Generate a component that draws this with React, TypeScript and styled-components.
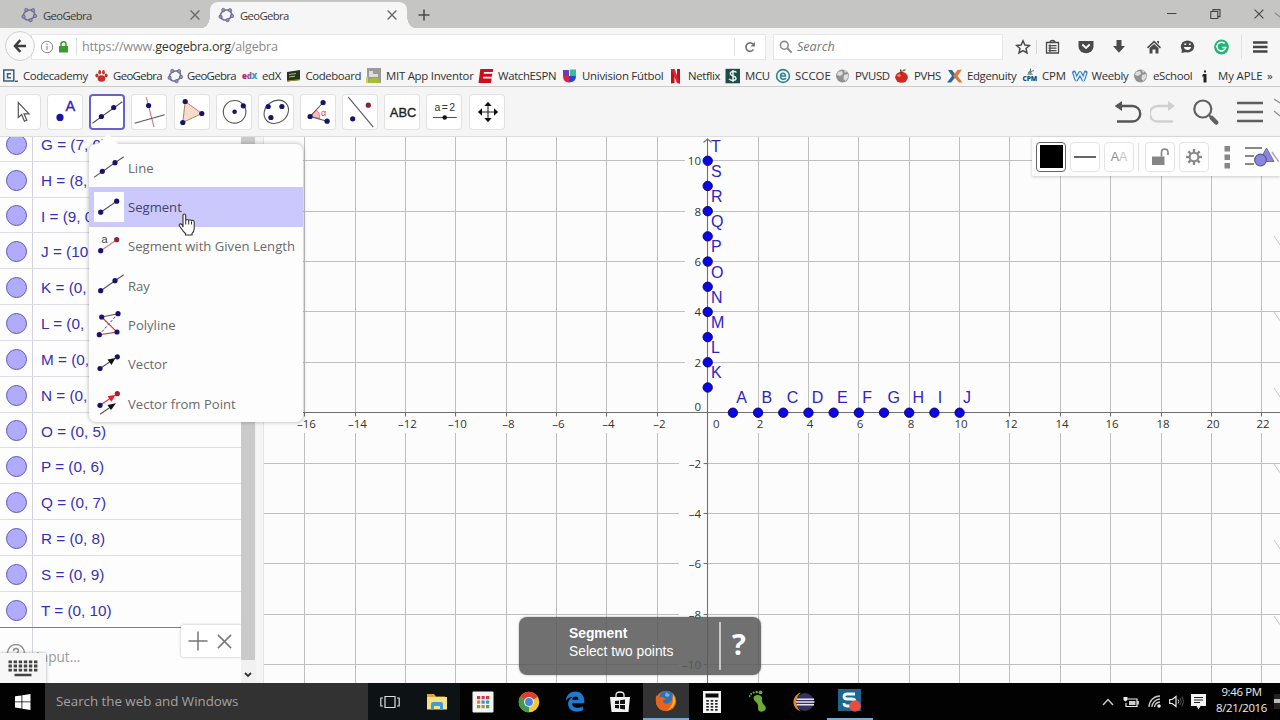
import React from 'react';
import styled, { createGlobalStyle } from 'styled-components';

const UI = '"Open Sans", "Noto Sans", sans-serif';
const ARIAL = '"Liberation Sans", Arial, sans-serif';

const GlobalStyle = createGlobalStyle`
  * { box-sizing: border-box; }
  body { margin: 0; overflow: hidden; font-family: ${UI}; }
  svg { display: block; flex: none; }
`;

const Screen = styled.div`
  position: relative;
  width: 1280px;
  height: 720px;
  display: flex;
  flex-direction: column;
  overflow: hidden;
  background: #fcfcfc;
`;

/* ---------- window frame and tabs ---------- */

const TabStrip = styled.div`
  height: 28px;
  flex: none;
  display: flex;
  align-items: flex-end;
  background: #c5c5c3;
  padding-left: 8px;
`;

const Tab = styled.div<{ $active?: boolean }>`
  position: relative;
  width: ${p => (p.$active ? 197 : 199)}px;
  margin-right: ${p => (p.$active ? 8 : 3)}px;
  height: 26px;
  padding: 0 ${p => (p.$active ? 10 : 7)}px 0 ${p => (p.$active ? 8 : 13)}px;
  display: flex;
  align-items: center;
  gap: 6px;
  font-size: 11.3px;
  letter-spacing: -0.65px;
  color: #3c3c3c;
  border-radius: 8px 8px 0 0;
  background: ${p => (p.$active ? '#f6f6f6' : 'transparent')};
  &::before, &::after {
    content: '';
    display: ${p => (p.$active ? 'block' : 'none')};
    position: absolute;
    bottom: 0;
    width: 8px;
    height: 12px;
  }
  &::before { left: -8px; background: radial-gradient(ellipse 8px 12px at 0 0, transparent 97%, #f6f6f6 100%); }
  &::after { right: -8px; background: radial-gradient(ellipse 8px 12px at 100% 0, transparent 97%, #f6f6f6 100%); }
`;

const Grow = styled.div`flex: 1;`;

const WindowButtons = styled.div`
  display: flex;
  align-items: center;
  gap: 33px;
  height: 28px;
  padding-right: 16px;
`;

/* ---------- address row ---------- */

const AddressRow = styled.div`
  height: 37px;
  flex: none;
  display: flex;
  align-items: center;
  background: #f6f6f6;
  padding-left: 5px;
`;

const BackButton = styled.div`
  position: relative;
  z-index: 1;
  width: 30px;
  height: 30px;
  margin-top: -1px;
  border-radius: 50%;
  border: 1px solid #cfcfcf;
  background: #fafafa;
  display: flex;
  align-items: center;
  justify-content: center;
`;

const UrlField = styled.div`
  width: 735px;
  height: 26px;
  margin-left: -4px;
  padding-left: 7px;
  background: #fff;
  border: 1px solid #e6e6e6;
  display: flex;
  align-items: center;
  font-size: 12.6px;
  color: #8a8a8a;
`;

const UrlText = styled.div`
  padding-left: 5px;
  margin-left: 6px;
  border-left: 1px solid #dcdcdc;
  letter-spacing: -0.2px;
  b { font-weight: 400; color: #333; }
`;

const Reload = styled.div`
  width: 31px;
  height: 18px;
  border-left: 1px solid #e0e0e0;
  display: flex;
  align-items: center;
  justify-content: center;
`;

const SearchField = styled.div`
  width: 230px;
  height: 26px;
  margin-left: 7px;
  padding-left: 5px;
  display: flex;
  align-items: center;
  gap: 4px;
  background: #fff;
  border: 1px solid #e6e6e6;
  font: italic 12.6px ${UI};
  color: #777;
`;

const BrowserActions = styled.div`
  display: flex;
  align-items: center;
  padding-left: 12px;
`;

const ActionSlot = styled.div<{ $w: number }>`
  width: ${p => p.$w}px;
  display: flex;
  align-items: center;
  justify-content: flex-start;
`;

/* ---------- bookmarks ---------- */

const Bookmarks = styled.div`
  height: 22px;
  flex: none;
  display: flex;
  align-items: center;
  padding-left: 3px;
  background: #f6f6f6;
  border-bottom: 1px solid #c9c9c9;
`;

const Bookmark = styled.div<{ $w: number; $ls?: number }>`
  width: ${p => p.$w}px;
  flex: none;
  display: flex;
  align-items: center;
  gap: 4px;
  font-size: 11.4px;
  letter-spacing: ${p => p.$ls ?? -0.35}px;
  color: #303030;
  white-space: nowrap;
`;

/* ---------- GeoGebra toolbar ---------- */

const Toolbar = styled.div`
  height: 50px;
  flex: none;
  display: flex;
  align-items: center;
  background: #f5f5f5;
  border-bottom: 1px solid #dedede;
  padding: 0 17px 0 5px;
`;

const Tools = styled.div`
  display: flex;
  gap: 6.15px;
`;

const Tool = styled.div<{ $active?: boolean }>`
  width: 36px;
  height: 36px;
  background: #fff;
  border-radius: 4px;
  box-shadow: inset 0 0 0 ${p => (p.$active ? '2px #6a5fcb' : '1px #e1e1e1')};
`;

const ToolbarRight = styled.div`
  display: flex;
  align-items: center;
  gap: 7px;
`;

/* ---------- work area ---------- */

const Work = styled.div`
  height: 546px;
  flex: none;
  display: flex;
`;

const AlgebraPanel = styled.div`
  position: relative;
  width: 241px;
  height: 546px;
  overflow: hidden;
  background: #fdfdfd;
`;

const Rows = styled.div`
  margin-top: -11.2px;
`;

const Row = styled.div`
  height: 35.85px;
  display: flex;
  border-bottom: 1px solid #dcdce2;
  &:last-child { border-bottom: 1px solid #7a74b8; }
`;

const Marble = styled.div`
  width: 33px;
  border-right: 1px solid #d2d2de;
  display: flex;
  align-items: center;
  padding: 2px 0 0 6px;
  &::before {
    content: '';
    width: 19px;
    height: 19px;
    border-radius: 50%;
    background: #b1abfb;
    border: 1.5px solid #6058b4;
  }
`;

const Expression = styled.div`
  padding: 10px 0 0 8px;
  font: 15.3px/18px ${ARIAL};
  color: #372fb8;
  white-space: nowrap;
`;

const InputRow = styled.div`
  height: 56px;
  display: flex;
  color: #9a9a9a;
  font: 13.6px/18px ${UI};
`;

const InputIcon = styled.div`
  width: 33px;
  padding: 15px 0 0 6px;
  border-right: 1px solid #d2d2de;
`;

const InputText = styled.div`
  padding: 20px 0 0 3px;
`;

const InputActions = styled.div`
  position: absolute;
  left: 181px;
  top: 488px;
  width: 60px;
  height: 32px;
  padding-left: 7px;
  display: flex;
  align-items: center;
  gap: 9px;
  background: #fff;
  border-radius: 3px 0 0 3px;
  box-shadow: 0 0 3px rgba(0, 0, 0, 0.28);
`;

const KeyboardButton = styled.div`
  position: absolute;
  left: 0;
  top: 516px;
  width: 46px;
  height: 31px;
  background: #f7f7f7;
  box-shadow: 0 0 3px rgba(0, 0, 0, 0.35);
  padding: 7px 0 0 8px;
`;

const ScrollTrack = styled.div`
  width: 15px;
  display: flex;
  flex-direction: column;
  background: #f1f1f1;
`;

const ScrollThumb = styled.div`
  height: 523px;
  width: 14px;
  background: #cacaca;
`;

const ScrollDown = styled.div`
  flex: 1;
  display: flex;
  align-items: center;
  justify-content: center;
  padding: 6px 2px 0 0;
`;

const Divider = styled.div`
  width: 8px;
  background: #f5f5f5;
  border-right: 1px solid #e4e4e4;
`;

const GraphPanel = styled.div`
  position: relative;
  width: 1016px;
  height: 546px;
  background: #fcfcfc;
`;

const StyleBar = styled.div`
  position: absolute;
  right: 0;
  top: 0;
  width: 248px;
  height: 39px;
  padding-left: 4px;
  display: flex;
  align-items: center;
  background: #fdfdfd;
  box-shadow: 0 1px 3px rgba(0, 0, 0, 0.2);
`;

const StyleButton = styled.div<{ $gap?: number; $selected?: boolean }>`
  width: 30px;
  height: 30px;
  margin-right: ${p => p.$gap ?? 4}px;
  border-radius: 4px;
  border: ${p => (p.$selected ? '1.5px solid #666' : '1px solid #e4e4e4')};
  background: #fff;
  display: flex;
  align-items: center;
  justify-content: center;
  font: 12.5px ${ARIAL};
  color: #8d8d8d;
  span { color: #c4c4c4; }
`;

const Swatch = styled.div`
  width: 23px;
  height: 23px;
  background: #000;
`;

const BarSeparator = styled.div`
  width: 1px;
  height: 28px;
  background: #e2e2e2;
  margin-right: 6px;
`;

const Hint = styled.div`
  position: absolute;
  left: 255px;
  top: 480px;
  width: 242px;
  height: 58px;
  border-radius: 8px;
  background: rgba(88, 88, 88, 0.86);
  box-shadow: 0 0 2px rgba(0, 0, 0, 0.4);
  display: flex;
  align-items: center;
  color: #fff;
  font: 13.8px/18px ${ARIAL};
`;

const HintText = styled.div`
  width: 200px;
  padding: 0 0 6px 50px;
  white-space: nowrap;
`;

const HintHelp = styled.div`
  height: 48px;
  width: 41px;
  border-left: 2px solid #c8c8c8;
  display: flex;
  align-items: center;
  justify-content: center;
  padding: 0 3px 5px 0;
  font: 700 29px ${UI};
`;

/* ---------- tool menu ---------- */

const Menu = styled.div`
  position: absolute;
  left: 89px;
  top: 144px;
  width: 214px;
  height: 278px;
  padding-top: 4px;
  border-radius: 7px;
  background: #fdfdfd;
  box-shadow: 0 0 4px rgba(0, 0, 0, 0.32);
  &::before {
    content: '';
    position: absolute;
    left: 8px;
    top: -10px;
    border: 11px solid transparent;
    border-top: 0;
    border-bottom: 11px solid #fdfdfd;
  }
`;

const MenuItem = styled.div<{ $active?: boolean }>`
  height: 39.35px;
  padding-left: 5px;
  display: flex;
  align-items: center;
  gap: 4px;
  font-size: 13.1px;
  white-space: nowrap;
  color: ${p => (p.$active ? '#464266' : '#6a6a6a')};
  background: ${p => (p.$active ? '#cbc8fb' : 'transparent')};
`;

const MenuIcon = styled.div<{ $active?: boolean }>`
  width: 30px;
  height: 30px;
  background: ${p => (p.$active ? '#fdfdff' : 'transparent')};
`;

const Cursor = styled.div`
  position: absolute;
  left: 177px;
  top: 212px;
`;

const EdgeMarks = styled.div`
  position: absolute;
  right: 0;
  top: 0;
`;

/* ---------- taskbar ---------- */

const Taskbar = styled.div`
  height: 37px;
  flex: none;
  display: flex;
  background: #020202;
  color: #fff;
`;

const StartButton = styled.div`
  width: 45px;
  display: flex;
  align-items: center;
  justify-content: center;
`;

const TaskSearch = styled.div`
  width: 323px;
  padding-left: 11px;
  background: #323232;
  color: #a3a3a3;
  font-size: 13.3px;
  line-height: 37px;
`;

const TaskIcon = styled.div<{ $active?: boolean; $underline?: boolean; $dark?: boolean }>`
  width: 45.9px;
  display: flex;
  align-items: center;
  justify-content: center;
  background: ${p => (p.$active ? '#333' : p.$dark ? '#0d1215' : 'transparent')};
  border-bottom: ${p => (p.$active || p.$underline ? '2px solid #76a9d6' : '0')};
`;

const Tray = styled.div`
  display: flex;
  align-items: center;
`;

const TraySlot = styled.div<{ $w: number }>`
  width: ${p => p.$w}px;
  display: flex;
  justify-content: center;
`;

const Clock = styled.div`
  width: 62px;
  padding: 0 0 3px 1px;
  text-align: center;
  font-size: 11.4px;
  line-height: 16px;
  letter-spacing: -0.35px;
  color: #eee;
`;

/* ---------- drawings ---------- */

const NAVY = '#17126e';
const RED = '#c43c44';

const Dot = ({ x, y, c = NAVY, r = 2.6 }: { x: number; y: number; c?: string; r?: number }) => (
  <circle cx={x} cy={y} r={r} fill={c} />
);

const Seg = ({ d, c = '#555' }: { d: string; c?: string }) => (
  <path d={d} stroke={c} strokeWidth="1.1" fill="none" />
);

const GeoLogo = () => (
  <svg width="16" height="16" viewBox="0 0 16 16">
    <ellipse cx="8" cy="8" rx="5.8" ry="4.8" transform="rotate(-25 8 8)" fill="none" stroke="#77778a" strokeWidth="1.7" />
    {[[5.3, 3], [12, 3.2], [14, 9], [9.5, 13.2], [2.6, 9.8]].map(([x, y]) => (
      <circle key={x} cx={x} cy={y} r="1.7" fill="#8d8dcc" stroke="#555577" strokeWidth=".6" />
    ))}
  </svg>
);

const Cross = ({ s = 10, c = '#6b6b6b', w = 1.4 }: { s?: number; c?: string; w?: number }) => (
  <svg width={s} height={s} viewBox="0 0 10 10"><path d="M.6.6l8.8 8.8M9.4.6L.6 9.4" stroke={c} strokeWidth={(w * 10) / s} /></svg>
);

const Globe = () => (
  <svg width="16" height="16" viewBox="0 0 16 16">
    <circle cx="7.5" cy="8" r="6.5" fill="#929292" />
    <path d="M3 4l4-1 1 3-3 2-3-1zM9 7l4-1 .5 3-3 4-2-2zM9 2l3 1-2 2z" fill="#dedede" />
  </svg>
);

const favicons: Record<string, React.ReactNode> = {
  code: <><path d="M.8 2h10v11H.8z" fill="#eef3f6" stroke="#3c5f76" strokeWidth="1.5" /><path d="M8 5.8H4.5v4H8" fill="none" stroke="#3c5f76" strokeWidth="1.4" /><path d="M12 13.3h3" stroke="#3c5f76" strokeWidth="1.5" /></>,
  paw: <g fill="#c33228"><ellipse cx="8.5" cy="10.5" rx="3.8" ry="3.2" /><ellipse cx="3.9" cy="7.4" rx="1.5" ry="2" /><ellipse cx="6.7" cy="4.2" rx="1.4" ry="2.2" /><ellipse cx="10.5" cy="4.2" rx="1.4" ry="2.2" /><ellipse cx="13.1" cy="7.4" rx="1.5" ry="2" /></g>,
  edx: <text x="0" y="11" fontSize="9.5" textLength="15" lengthAdjust="spacingAndGlyphs" fontWeight="800" fontFamily="Open Sans"><tspan fill="#b72667">e</tspan><tspan fill="#8a5a9a">d</tspan><tspan fill="#1d9dd9">X</tspan></text>,
  board: <><path d="M1 4l13-2v10L1 13.5z" fill="#25331f" /><path d="M3 6.5l7-1M3 9l6-.8" stroke="#a3bd76" strokeWidth="1.2" /><path d="M1 13l13-1.4" stroke="#9b8d3b" /></>,
  mit: <><path d="M1 0h14v15H1z" fill="#9a9a9a" /><path d="M3 3h4v3h5v3H3z" fill="#dcdcdc" /><path d="M2 15c1-7 12-7 12 0z" fill="#a5bf2c" /><path d="M1 9v6" stroke="#d8d335" strokeWidth="2" /></>,
  espn: <path d="M2.3 1h13l-.6 3H6l-.3 1.8h8.6l-.5 3H5.2L5 10.5h8.600l-.6 4.5H.5z" fill="#c9101c" />,
  uni: <><path d="M1 2h6v6H1z" fill="#6d3bb4" /><path d="M8 1.500h6V8H8z" fill="#30c294" /><path d="M1 8h6v6.500Q1 14 1 8z" fill="#d8234d" /><path d="M7 8h7q0 6-7 6.500z" fill="#2447d6" /></>,
  netflix: <><path d="M3 1h3.500v14L3 15.500zM9 1h3v14.500L9 15z" fill="#b5131d" /><path d="M3 1h3.500L12 15.500 9 15z" fill="#e01f2a" /></>,
  mcu: <><path d="M.5.8h14.500v14.500H.5z" fill="#1f4c47" /><path d="M11.500 4.500c-3-2.500-7-.5-6 1.700s5.500 1.500 5.500 4-4 3-7 .8M8 2v12" stroke="#e6f0ee" strokeWidth="1.500" fill="none" /></>,
  sccoe: <g fill="none" stroke="#2f8296"><circle cx="8" cy="8" r="6.400" strokeWidth="1.600" /><path d="M5.500 8h5c0-4-5-3.500-5 .2s4 3.600 5.500 1.800" strokeWidth="1.500" /></g>,
  apple: <><ellipse cx="7.500" cy="9.300" rx="6.300" ry="5.500" fill="#cf2a20" /><ellipse cx="5" cy="7.500" rx="1.800" ry="1.300" fill="#f08a72" /><path d="M7.500 5.500L6.500 1.500" stroke="#5b3a1e" strokeWidth="1.300" /><path d="M7.500 3.500q2-3 4.500-2-1 2.600-4.500 2z" fill="#5d8d2b" /></>,
  edge: <><path d="M1 2l4 0 4.500 6L4 14.500 0 14.500 5 8z" fill="#31659a" /><path d="M15 1.500l-4.500.5L6 8l6 6.500h3.500L10.500 8z" fill="#e07a32" /></>,
  cpm: <><path d="M5 7l3-5 3 5z" fill="#7d9db4" /><path d="M8.500 .5v4.500M6 4.500l6-2" stroke="#5b7f60" /><text x=".5" y="13.200" fontSize="7" textLength="14.500" lengthAdjust="spacingAndGlyphs" fontWeight="800" fontFamily="Open Sans" fill="#27496d">CPM</text></>,
  weebly: <><path d="M2 4.500l2.300 7L8 5l3.400 6.500 2.300-7" stroke="#2d7cc4" strokeWidth="3.900" strokeLinejoin="round" strokeLinecap="round" fill="none" /><path d="M2 4.500l2.300 7L8 5l3.400 6.500 2.300-7" stroke="#e2f0fb" strokeWidth="1.700" fill="none" /></>,
  aple: <path d="M6 2.500h2v2H6zM5 6h3.500v8.500h-3V8.500H4z" fill="#222" />,
};

const Fav = ({ n }: { n: string }) => {
  if (n === 'geo') return <GeoLogo />;
  if (n === 'globe') return <Globe />;
  return <svg width="16" height="16" viewBox="0 0 16 16" overflow="visible">{favicons[n]}</svg>;
};

const bookmarks: [string, string, number, number?][] = [
  ['code', 'Codecademy', 90, -0.4], ['paw', 'GeoGebra', 74, -0.65], ['geo', 'GeoGebra', 75, -0.65], ['edx', 'edX', 43.5],
  ['board', 'Codeboard', 80.5, -0.4], ['mit', 'MIT App Inventor', 112, -0.25], ['espn', 'WatchESPN', 84], ['uni', 'Univision Fútbol', 106, -0.25],
  ['netflix', 'Netflix', 57], ['mcu', 'MCU', 50], ['sccoe', 'SCCOE', 60, 0], ['globe', 'PVUSD', 59], ['apple', 'PVHS', 53],
  ['edge', 'Edgenuity', 75], ['cpm', 'CPM', 49.5, -0.1], ['weebly', 'Weebly', 61.5], ['globe', 'eSchool', 65], ['aple', 'My APLE', 69, -0.1],
];

const toolIcons: React.ReactNode[] = [
  <path d="M13.300 8.500v15l3.400-3 2.700 6.700 2.400-1-2.800-6.400h5z" fill="#fff" stroke="#555" strokeWidth="1.200" />,
  <><Dot x={13} y={23.400} r={3.600} c="#1a13a8" /><text x="18.500" y="17.300" fontSize="14.500" fontFamily={ARIAL} fill="#3125bd" stroke="#3125bd" strokeWidth=".4">A</text></>,
  <><Seg d="M3.400 29.200L33.400 7.800" /><Dot x={12.400} y={22.500} /><Dot x={24.700} y={13.500} /></>,
  <><Seg d="M15.300 3.200l7.700 30" c="#d2777b" /><Seg d="M3.600 29.200l30-8.400" /><Dot x={17.600} y={11.500} /></>,
  <><path d="M11.200 7.500l16.600 12-19 9z" fill="#f5dccb" stroke="#b08468" /><Dot x={11.200} y={7.500} /><Dot x={27.800} y={19.500} /><Dot x={8.800} y={28.500} /></>,
  <><circle cx="18.600" cy="17.800" r="11.300" fill="none" stroke="#555" strokeWidth="1.100" /><Dot x={18.600} y={17.800} r={2.300} /><Dot x={27.300} y={11.800} /></>,
  <><ellipse cx="18.300" cy="17.800" rx="13" ry="10.800" transform="rotate(-38 18.300 17.800)" fill="none" stroke="#555" strokeWidth="1.100" /><Dot x={10.200} y={12.500} /><Dot x={23.900} y={12.500} /><Dot x={12.900} y={23.500} /></>,
  <><path d="M10.100 22.500l6-6.500q4 2.600 3.600 8.500z" fill="#f7bcbc" stroke="#d8666a" strokeWidth=".8" /><Seg d="M23.100 8.500l-13 14 17 4.700" /><Dot x={23.100} y={8.500} /><Dot x={10.100} y={22.500} /><Dot x={27.100} y={27.200} /><text x="21" y="21.500" fontSize="9" fontFamily={ARIAL} fill="#d43c40">α</text></>,
  <><Seg d="M6.300 3.200l25 30" /><Dot x={10.700} y={24.800} /><Dot x={26.300} y={11.200} c="#8a2034" /></>,
  <text x="5.800" y="22.700" fontSize="13.500" textLength="26.500" lengthAdjust="spacingAndGlyphs" fontFamily={ARIAL} fill="#222" stroke="#222" strokeWidth=".35">ABC</text>,
  <><text x="8.500" y="17.300" fontSize="10.500" textLength="20.500" fontFamily={ARIAL} fill="#333">a=2</text><Seg d="M7 23.500h23.700" /><circle cx="18.700" cy="23.500" r="2.300" fill="#111" /></>,
  <><path d="M19 10v16M11 18h16" stroke="#222" strokeWidth="1.100" /><path d="M19 7.800l3.700 4.200h-7.400zM19 28.200l3.700-4.200h-7.400zM8.800 18l4.200-3.700v7.400zM29.200 18L25 14.300v7.400z" fill="#111" /></>,
];

const menuItems: [string, React.ReactNode][] = [
  ['Line', <><Seg d="M0 24.300L29.700 3.700" /><Dot x={8.300} y={18.300} /><Dot x={21} y={9.700} /></>],
  ['Segment', <><Seg d="M6.700 20.200l16-11" /><Dot x={6.700} y={20.200} /><Dot x={22.700} y={9.200} /></>],
  ['Segment with Given Length', <><Seg d="M6.700 19.700l16-11" c="#d8777c" /><Dot x={6.700} y={19.700} /><Dot x={22.700} y={8.700} c="#8f2436" /><text x="7.500" y="12" fontSize="11" fontFamily={ARIAL} fill="#444">a</text></>],
  ['Ray', <><Seg d="M6.700 19.700l23-16" /><Dot x={6.700} y={19.700} /><Dot x={21} y={9.700} /></>],
  ['Polyline', <><path d="M24 3.700L5.300 24.700" stroke="#444" strokeDasharray="2.500 1.800" /><Seg d="M7.700 7L23 22 5.300 24.700" c={RED} /><Seg d="M24 3.700L7.700 7" c="#7a4a4a" /><Dot x={7.700} y={7} /><Dot x={24} y={3.700} /><Dot x={23} y={22} /><Dot x={5.300} y={24.700} /></>],
  ['Vector', <><Seg d="M6 19.500l12-8" /><path d="M21.500 9l-4 7-4-5.500z" fill="#111" /><Dot x={6} y={19.500} /><Dot x={23.300} y={7.800} /></>],
  ['Vector from Point', <><Seg d="M6 16.300l12-8" c="#d83b3b" /><path d="M21.500 5.800l-4 7-4-5.500z" fill="#ef1f1f" /><Dot x={6} y={16.300} /><Dot x={23.300} y={4.700} c="#9c2030" /><Seg d="M6 25.300l11-7.500" /><path d="M22 14.300l-5 6.800-3.500-5z" fill="#111" /></>],
];

const expressions = [
  'G = (7, 0)', 'H = (8, 0)', 'I = (9, 0)', 'J = (10, 0)', 'K = (0, 1)', 'L = (0, 2)', 'M = (0, 3)',
  'N = (0, 4)', 'O = (0, 5)', 'P = (0, 6)', 'Q = (0, 7)', 'R = (0, 8)', 'S = (0, 9)', 'T = (0, 10)',
];

/* ---------- graph ---------- */

const OX = 707.7;
const OY = 412.7;
const UNIT = 25.19;
const px = (x: number) => Math.round(OX + x * UNIT - 0.5) + 0.5;
const py = (y: number) => Math.round(OY - y * UNIT - 0.5) + 0.5;
const minus = (n: number) => (n < 0 ? `–${-n}` : `${n}`);

const Graph = () => {
  const xs = Array.from({ length: 20 }, (_, i) => -16 + i * 2).filter(n => n !== 0);
  const ys = Array.from({ length: 11 }, (_, i) => -10 + i * 2).filter(n => n !== 0);
  return (
    <svg width="1016" height="546" viewBox="264 137 1016 546">
      <g stroke="#bfbfbf" strokeWidth="1">
        {xs.map(x => <path key={x} d={`M${px(x)} 137V413M${px(x)} 433V683`} />)}
        {ys.map(y => <path key={y} d={`M264 ${py(y)}H${y > 0 ? 685 : 679}M703 ${py(y)}H1280`} />)}
      </g>
      <g stroke="#707070" strokeWidth="1.100">
        <path d={`M264 ${py(0)}H1280M${px(0)} 139V683`} />
        {xs.map(x => <path key={x} d={`M${px(x)} 413v3.500`} />)}
        {ys.map(y => <path key={y} d={`M${px(0)} ${py(y)}h-3.500`} />)}
        <path d={`M${px(0) - 4} 142.500l4-3.500 4 3.500`} fill="none" />
      </g>
      <g fontFamily={UI} fontSize="11.500" fill="#333">
        {xs.map(x => <text key={x} x={px(x) + (x < 0 ? 2 : 1.500)} y="427.600" textAnchor="middle">{minus(x)}</text>)}
        {ys.map(y => <text key={y} x="701" y={py(y) + 4.200} textAnchor="end">{minus(y)}</text>)}
        <text x="713" y="427.600">0</text>
        <text x="701" y="411" textAnchor="end">0</text>
      </g>
      <g stroke="#c4c4c4">
        {[236, 312, 388, 464, 540, 616].map(y => <path key={y} d={`M1274 ${y}l7 10`} />)}
      </g>
      <g fill="#0b05e8" stroke="#08045e" strokeWidth=".9">
        {'ABCDEFGHIJ'.split('').map((n, i) => <circle key={n} cx={OX + (i + 1) * UNIT} cy={OY} r="4.700" />)}
        {'KLMNOPQRST'.split('').map((n, i) => <circle key={n} cx={OX} cy={OY - (i + 1) * UNIT} r="4.700" />)}
      </g>
      <g fontFamily={ARIAL} fontSize="16" fill="#2f24c0">
        {'ABCDEFGHIJ'.split('').map((n, i) => <text key={n} x={OX + (i + 1) * UNIT + 3.400} y="403.300">{n}</text>)}
        {'KLMNOPQRST'.split('').map((n, i) => <text key={n} x={OX + 3.400} y={OY - (i + 1) * UNIT - 9.200}>{n}</text>)}
      </g>
    </svg>
  );
};

/* ---------- taskbar icons ---------- */

const TaskView = () => (
  <svg width="22" height="16" viewBox="0 0 22 16"><path d="M5 2.500h10v11H5zM3 4H.8v8H3M17 4h2.200v8H17" fill="none" stroke="#ddd" strokeWidth="1.200" /></svg>
);
const Folder = () => (
  <svg width="22" height="20" viewBox="0 0 22 20"><path d="M1 2h7l2 2.500h9V8H1z" fill="#d9a83a" /><path d="M1 5h20v12.500H1z" fill="#f7df86" /><path d="M5 18v-6q0-2 2-2h8q2 0 2 2v6h-3v-4H8v4z" fill="#3f9fd0" /></svg>
);
const AppGrid = () => (
  <svg width="22" height="22" viewBox="0 0 22 22">
    <rect width="21" height="21" x=".5" y=".5" rx="1" fill="#f3f3f3" />
    {['#cf3b3b', '#c93a62', '#cf3b3b', '#d9822f', '#3b8bd0', '#2aa0a0', '#63ab3c', '#c78c2a', '#3bab5f'].map((c, i) => (
      <rect key={i} x={5 + (i % 3) * 4.500} y={5 + Math.floor(i / 3) * 4.500} width="3.200" height="3.200" fill={c} />
    ))}
  </svg>
);
const Chrome = () => (
  <svg width="22" height="22" viewBox="0 0 22 22">
    <circle cx="11" cy="11" r="10.300" fill="#f5c732" />
    <path d="M11 11L2.080 5.850A10.300 10.300 0 0 1 19.920 5.850z" fill="#d9402f" />
    <path d="M11 11L2.080 5.850A10.300 10.300 0 0 0 11 21.300z" fill="#3f9a4c" />
    <path d="M11 6h9l-1-2H11z" fill="#d9402f" />
    <circle cx="11" cy="11" r="5" fill="#eef2f6" /><circle cx="11" cy="11" r="3.900" fill="#4a84dc" />
  </svg>
);
const EdgeIcon = () => (
  <svg width="20" height="21" viewBox="0 0 20 21"><path d="M.6 9.800C1.500 3.800 5.500.6 10.300.6c5.800 0 9 4.200 9 9.600v2.100H7c.2 5 6.600 5.600 11 3v4c-6.500 3.200-14.700.8-14.900-6.300C3 9.500 5.500 6.900 8.300 5.700 5.200 5.700 2.200 7.300.6 9.800zM7.200 8.800h6.300c0-4.600-6-4.400-6.300 0z" fill="#2079cf" /></svg>
);
const Store = () => (
  <svg width="20" height="22" viewBox="0 0 20 22"><path d="M6 6V4q0-3 4-3t4 3v2" fill="none" stroke="#eee" strokeWidth="1.300" /><path d="M0 6h20l-1.500 15H1.500z" fill="#f2f2f2" /><path d="M5 10l4-.6v3.600H5zM10 9.200l5-.7V13h-5zM5 14h4v3.600L5 17zM10 14h5v4.500l-5-.7z" fill="#111" /></svg>
);
const Firefox = () => (
  <svg width="22" height="22" viewBox="0 0 22 22"><circle cx="11" cy="11" r="10.200" fill="#e4701e" /><circle cx="11.500" cy="8" r="7.300" fill="#2f6fb4" /><path d="M11 2l4 3-2 2-3-1z" fill="#71b6e0" /><path d="M1.200 5C2 7 3 7.500 5.500 7c2.500-.5 4.500 1 5.500 2.500-1.500 0-2.500.5-3 1.700 1 3.500 6 3 8 .3 1.800-2.500.5-5.500.5-5.500C24 9 20 20 11 21 3 21-.500 13 1.200 5z" fill="#e8641b" /><path d="M17.500 4C22.500 9.500 20 18 12.500 20.500 17.500 16 19 11 17.500 4z" fill="#f6b838" /></svg>
);
const Calculator = () => (
  <svg width="18" height="22" viewBox="0 0 18 22"><path d="M0 0h18v22H0z" fill="#f3f3f3" /><path d="M2.500 2.500h13v4h-13z" fill="#0a0a0a" />{[0, 1, 2, 3].flatMap(r => [0, 1, 2].map(c => <rect key={`${r}${c}`} x={3.300 + c * 4.400} y={9 + r * 3} width="2.500" height="1.700" fill="#222" />))}</svg>
);
const Foot = () => (
  <svg width="20" height="23" viewBox="0 0 20 23"><g fill="#6faa35"><path d="M6 6.500c3-3 9-1.500 8 3-.5 3 1 4 3 6.500 3 4-3 7-6 5-2-2 0-4-1.500-7C8.500 11.500 4 10 6 6.500z" /><circle cx="12.500" cy="2.300" r="1.900" /><circle cx="8.700" cy="2" r="1.200" /><circle cx="5.700" cy="2.600" r="1.100" /><circle cx="3.200" cy="4" r="1" /><circle cx="1.700" cy="6" r=".9" /></g></svg>
);
const Eclipse = () => (
  <svg width="23" height="20" viewBox="0 0 23 20"><path d="M9 .6A9.600 9.600 0 0 0 9 19.400 12 12 0 0 1 9 .6z" fill="#e38a28" /><circle cx="13" cy="10" r="9" fill="#36315f" /><path d="M4.500 7.200h17.500M4 10h18.500M4.500 12.800h17.500" stroke="#e4e4f0" strokeWidth="1.400" /></svg>
);
const Snagit = () => (
  <svg width="23" height="23" viewBox="0 0 23 23"><path d="M0 0h23v22H0z" fill="#1c668f" /><path d="M17 5H9.500Q6 5 6 7.500T9.500 10H14q3 0 3 3M6 14q0 3 3 3h3" fill="none" stroke="#f1f6f8" strokeWidth="2.800" /><circle cx="17" cy="17" r="5.800" fill="#e84b40" /></svg>
);

export default function App() {
  return (
    <Screen>
      <GlobalStyle />
      <TabStrip>
        <Tab><GeoLogo /><span>GeoGebra</span><Grow /><Cross /></Tab>
        <Tab $active><GeoLogo /><span>GeoGebra</span><Grow /><Cross /></Tab>
        <svg width="18" height="28" viewBox="0 0 18 28"><path d="M9 9.500v11M3.500 15h11" stroke="#4c4c4c" strokeWidth="1.600" /></svg>
        <Grow />
        <WindowButtons>
          <svg width="10" height="10"><path d="M0 4.500h9.500" stroke="#444" /></svg>
          <svg width="11" height="10" viewBox="0 0 11 10"><path d="M.8 2.500h7v7h-7zM3 2.500V.6h7v7H8" fill="none" stroke="#444" strokeWidth="1.100" /></svg>
          <Cross c="#444" w={1.100} />
        </WindowButtons>
      </TabStrip>

      <AddressRow>
        <BackButton><svg width="14" height="14" viewBox="0 0 14 14"><path d="M7.300 1.200L2 7l5.300 5.800M2.500 7H13" fill="none" stroke="#3e3e3e" strokeWidth="2.500" /></svg></BackButton>
        <UrlField>
          <svg width="31" height="16" viewBox="0 0 31 16">
            <circle cx="8" cy="8" r="5.700" fill="none" stroke="#8c8c8c" /><path d="M8 7v4M8 4.600v1.400" stroke="#8c8c8c" strokeWidth="1.200" />
            <path d="M20 7h9v6.500h-9z" fill="#3d9a2c" /><path d="M22 7V5q0-2.300 2.500-2.300T27 5v2" fill="none" stroke="#3d9a2c" strokeWidth="1.500" />
          </svg>
          <UrlText>https://www.<b>geogebra.org</b>/algebra</UrlText>
          <Grow />
          <Reload><svg width="12" height="12" viewBox="0 0 12 12"><path d="M9.500 8.600A4.200 4.200 0 1 1 9.200 3.200" fill="none" stroke="#777" strokeWidth="1.700" /><path d="M11 .8v4.700H6.400z" fill="#777" /></svg></Reload>
        </UrlField>
        <SearchField>
          <svg width="14" height="14" viewBox="0 0 14 14"><circle cx="5.300" cy="5.300" r="3.900" fill="none" stroke="#8a8a8a" strokeWidth="1.600" /><path d="M8.300 8.300l4.300 4.300" stroke="#8a8a8a" strokeWidth="2" /></svg>
          Search
        </SearchField>
        <BrowserActions>
          <ActionSlot $w={30}><svg width="22" height="16" viewBox="0 0 22 16"><path d="M8 1.800l1.900 4.200 4.500.5-3.400 3 1 4.500L8 11.700 4 14l1-4.500-3.400-3L6.100 6z" fill="none" stroke="#4a4a4a" strokeWidth="1.500" /><path d="M21.500 1v14" stroke="#d4d4d4" /></svg></ActionSlot>
          <ActionSlot $w={33}><svg width="16" height="16" viewBox="0 0 16 16"><path d="M1.500 3.500h12v10.500h-12zM5 3.500q0-2 2.500-2t2.500 2M3.500 6.700h8M3.500 9.200h8M3.500 11.700h8M5 5.500v7.500" fill="none" stroke="#4a4a4a" strokeWidth="1.300" /></svg></ActionSlot>
          <ActionSlot $w={35}><svg width="16" height="14" viewBox="0 0 16 14"><path d="M.5 1h15v5.500a7.500 6.800 0 0 1-15 0z" fill="#4a4a4a" /><path d="M4.300 4.500L8 8l3.700-3.500" stroke="#fff" strokeWidth="1.800" fill="none" /></svg></ActionSlot>
          <ActionSlot $w={34}><svg width="12" height="13" viewBox="0 0 12 13"><path d="M3.500 0h5v6H12l-6 6.700L0 6h3.500z" fill="#4a4a4a" /></svg></ActionSlot>
          <ActionSlot $w={33}><svg width="14" height="14" viewBox="0 0 14 14"><path d="M7 .5l7 6.700-1 1.200L7 2.800 1 8.400 0 7.200zM10 1h2v3l-2-2zM2.500 8L7 4l4.500 4v5.500h-3V9.500h-3v4h-3z" fill="#4a4a4a" /></svg></ActionSlot>
          <ActionSlot $w={34}><svg width="15" height="14" viewBox="0 0 15 14"><ellipse cx="7.500" cy="6.500" rx="6.700" ry="6" fill="#4a4a4a" /><path d="M2 8.500L1.500 13l5-1z" fill="#4a4a4a" /><path d="M4.300 4.300h1.800M8.900 4.300h1.800" stroke="#fff" strokeWidth="1.500" /><path d="M3.800 7h7.400q-.8 3-3.700 3T3.800 7z" fill="#fff" /></svg></ActionSlot>
          <ActionSlot $w={39}><svg width="35" height="28" viewBox="0 0 35 28"><circle cx="7.500" cy="14" r="7.400" fill="#1fb573" /><path d="M10.700 10.600a4.400 4.400 0 1 0 1 4h-3.500" fill="none" stroke="#fff" strokeWidth="1.500" /><path d="M27.500 2v24" stroke="#e0e0e0" /></svg></ActionSlot>
          <svg width="15" height="12" viewBox="0 0 15 12"><path d="M0 1.500h14.500M0 6h14.500M0 10.500h14.500" stroke="#444" strokeWidth="2.300" /></svg>
        </BrowserActions>
      </AddressRow>

      <Bookmarks>
        {bookmarks.map(([icon, label, w, ls], i) => (
          <Bookmark key={i} $w={w} $ls={ls}><Fav n={icon} />{label}</Bookmark>
        ))}
        <Bookmark $w={12}>»</Bookmark>
      </Bookmarks>

      <Toolbar>
        <Tools>
          {toolIcons.map((icon, i) => (
            <Tool key={i} $active={i === 2}><svg width="36" height="36" viewBox="0 0 36 36">{icon}</svg></Tool>
          ))}
        </Tools>
        <Grow />
        <ToolbarRight>
          <svg width="28" height="26" viewBox="0 0 28 26"><path d="M2 7h15.500a7.500 7.500 0 0 1 0 15.500H2" fill="none" stroke="#555" strokeWidth="2.400" /><path d="M-.5 7L7 2v10z" fill="#555" /></svg>
          <svg width="28" height="26" viewBox="0 0 28 26"><path d="M22 7H7.500a7.500 7.500 0 0 0 0 15.500H23" fill="none" stroke="#d0d0d0" strokeWidth="2.400" /><path d="M25 7l-7-5v10z" fill="#d0d0d0" /></svg>
          <svg width="45" height="28" viewBox="0 0 45 28"><circle cx="17.800" cy="11" r="8.500" fill="none" stroke="#606060" strokeWidth="2.200" /><path d="M23.800 17l3 3" stroke="#606060" strokeWidth="2" /><path d="M26.800 20l4.500 4.500" stroke="#606060" strokeWidth="4.500" strokeLinecap="round" /></svg>
          <svg width="26" height="24" viewBox="0 0 26 24"><path d="M0 3h26M0 12h26M0 21h26" stroke="#5e5e5e" strokeWidth="2.400" /></svg>
        </ToolbarRight>
      </Toolbar>

      <Work>
        <AlgebraPanel>
          <Rows>
            {expressions.map(e => <Row key={e}><Marble /><Expression>{e}</Expression></Row>)}
          </Rows>
          <InputRow>
            <InputIcon><svg width="20" height="20" viewBox="0 0 20 20"><circle cx="10" cy="10" r="8.500" fill="none" stroke="#909090" strokeWidth="1.500" /><path d="M7.500 8q0-2.500 2.500-2.500T12.500 8q0 1.200-2.500 3" fill="none" stroke="#909090" strokeWidth="1.500" /></svg></InputIcon>
            <InputText>Input...</InputText>
          </InputRow>
          <InputActions>
            <svg width="20" height="20" viewBox="0 0 20 20"><path d="M10 .5v19M.5 10h19" stroke="#777" strokeWidth="1.500" /></svg>
            <Cross s={15} c="#777" w={1.500} />
          </InputActions>
          <KeyboardButton>
            <svg width="31" height="18" viewBox="0 0 31 18"><g stroke="#444" strokeWidth="2.800" strokeDasharray="3.400 1.700"><path d="M.5 1.800h30" /><path d="M.5 6h30" /><path d="M.5 10.200h30" /></g><path d="M6.500 15h17" stroke="#444" strokeWidth="2.500" /></svg>
          </KeyboardButton>
        </AlgebraPanel>
        <ScrollTrack>
          <ScrollThumb />
          <ScrollDown><svg width="8" height="6" viewBox="0 0 8 6"><path d="M1 1l3 3 3-3" fill="none" stroke="#333" strokeWidth="1.800" /></svg></ScrollDown>
        </ScrollTrack>
        <Divider />
        <GraphPanel>
          <Graph />
          <StyleBar>
            <StyleButton $selected><Swatch /></StyleButton>
            <StyleButton><svg width="22" height="4"><path d="M0 2h22" stroke="#333" strokeWidth="1.500" /></svg></StyleButton>
            <StyleButton>A<span>A</span></StyleButton>
            <BarSeparator />
            <StyleButton><svg width="20" height="20" viewBox="0 0 20 20"><path d="M2 9.500h12.500V18H2z" fill="#858585" /><path d="M11.500 9.500V5.500q0-3.500 3.200-3.500T18 5.500V8" fill="none" stroke="#858585" strokeWidth="1.700" /></svg></StyleButton>
            <StyleButton $gap={14}>
              <svg width="18" height="18" viewBox="0 0 18 18"><circle cx="9" cy="9" r="4.300" fill="none" stroke="#888" strokeWidth="2" />{[0, 45, 90, 135, 180, 225, 270, 315].map(a => <path key={a} d="M9 1v3.200" stroke="#888" strokeWidth="2.400" transform={`rotate(${a} 9 9)`} />)}</svg>
            </StyleButton>
            <svg width="56" height="28" viewBox="0 0 56 28">
              <path d="M1.500 3h5.500v5.500H1.500zM1.500 11.500h5.500V17H1.500zM1.500 20h5.500v5.500H1.500z" fill="#888" />
              <path d="M22 5h17M22 13h9M22 21h9" stroke="#888" strokeWidth="2" />
              <path d="M36 18.500L43.500 5 51 18.500z" fill="#8b86d8" stroke="#6f69b4" />
              <circle cx="37.500" cy="17" r="5.800" fill="#8b85e0" stroke="#5b55a0" strokeWidth="1.200" />
              <path d="M49 9l7 10" stroke="#aaa" strokeWidth="1.500" />
            </svg>
          </StyleBar>
          <Hint>
            <HintText><b>Segment</b><br />Select two points</HintText>
            <HintHelp>?</HintHelp>
          </Hint>
        </GraphPanel>
      </Work>

      <Menu>
        {menuItems.map(([label, icon], i) => (
          <MenuItem key={label} $active={i === 1}>
            <MenuIcon $active={i === 1}><svg width="30" height="30" viewBox="0 0 30 30">{icon}</svg></MenuIcon>
            {label}
          </MenuItem>
        ))}
      </Menu>
      <Cursor>
        <svg width="20" height="25" viewBox="0 0 20 25"><path d="M6 15V3.500Q6 2 7.300 2T8.700 3.500V9q.2-1.500 1.500-1.500T11.700 9q.2-1.200 1.400-1.200t1.400 1.400q.2-.9 1.300-.9T17.200 10v6.500Q17 20 15 21.500V23H8.500v-1.500Q6.500 20 5 17.500L2.500 14q-.8-1.500.4-2t2.200.8z" fill="#fff" stroke="#333" strokeWidth="1.100" /><path d="M8.700 9v3.500M11.700 9v3.500M14.500 9.500v3" stroke="#333" /></svg>
      </Cursor>
      <EdgeMarks>
        <svg width="8" height="120" viewBox="0 0 8 120"><path d="M3 13l5 4M2 99l6 4M2 111l6 5" stroke="#8a8a8a" strokeWidth="1.200" /></svg>
      </EdgeMarks>

      <Taskbar>
        <StartButton><svg width="16" height="16" viewBox="0 0 16 16"><path d="M0 2.300l6.500-.9v6.100H0zM7.300 1.300L15.500 0v7.500H7.300zM0 8.300h6.500v6.100L0 13.500zM7.300 8.300h8.200V16l-8.200-1.300z" fill="#fff" /></svg></StartButton>
        <TaskSearch>Search the web and Windows</TaskSearch>
        <TaskIcon $dark><TaskView /></TaskIcon>
        <TaskIcon $dark><Folder /></TaskIcon>
        <TaskIcon><AppGrid /></TaskIcon>
        <TaskIcon><Chrome /></TaskIcon>
        <TaskIcon><EdgeIcon /></TaskIcon>
        <TaskIcon><Store /></TaskIcon>
        <TaskIcon $active><Firefox /></TaskIcon>
        <TaskIcon><Calculator /></TaskIcon>
        <TaskIcon><Foot /></TaskIcon>
        <TaskIcon><Eclipse /></TaskIcon>
        <TaskIcon $underline><Snagit /></TaskIcon>
        <Grow />
        <Tray>
          <TraySlot $w={24}><svg width="12" height="8" viewBox="0 0 12 8"><path d="M1 7l5-5.500L11 7" fill="none" stroke="#ccc" strokeWidth="1.400" /></svg></TraySlot>
          <TraySlot $w={22}><svg width="16" height="12" viewBox="0 0 16 12"><path d="M4.500 3h9.500v7.500h-11V7" fill="none" stroke="#eee" strokeWidth="1.200" /><path d="M15 5v3.500" stroke="#eee" strokeWidth="1.500" /><path d="M6 5h6.500v4H6z" fill="#ccc" /><path d="M.5 1h4v3l-2 1.500L.5 4z" fill="#eee" /></svg></TraySlot>
          <TraySlot $w={24}><svg width="13" height="13" viewBox="0 0 13 13"><path d="M1 12A11 11 0 0 1 12 1M3.800 12A8.500 8.500 0 0 1 12 4M6.500 12A6 6 0 0 1 12 7" fill="none" stroke="#ccc" strokeWidth="1.300" /><circle cx="11" cy="11" r="1.800" fill="#eee" /></svg></TraySlot>
          <TraySlot $w={20}><svg width="15" height="13" viewBox="0 0 15 13"><path d="M.7 4.500h2.500L7 1.500v10L3.200 8.500H.7z" fill="none" stroke="#eee" strokeWidth="1.200" /><path d="M9 4.500q1.500 2 0 4" fill="none" stroke="#ccc" /><path d="M11 3q2.500 3.500 0 7M13 1.500q3 5 0 10" fill="none" stroke="#555" /></svg></TraySlot>
          <TraySlot $w={24}><svg width="15" height="16" viewBox="0 0 15 16"><path d="M0 0h15v12H9.500L7.500 15.500 5.500 12H0z" fill="#f5f5f5" /><path d="M3 3.500h9M3 6h9M3 8.500h6" stroke="#222" /></svg></TraySlot>
          <Clock>9:46 PM<br />8/21/2016</Clock>
          <svg width="8" height="20"><path d="M2 2h6v15H2z" fill="#222" /><path d="M2 9h6" stroke="#bbb" strokeWidth="4" /></svg>
        </Tray>
      </Taskbar>
    </Screen>
  );
}
